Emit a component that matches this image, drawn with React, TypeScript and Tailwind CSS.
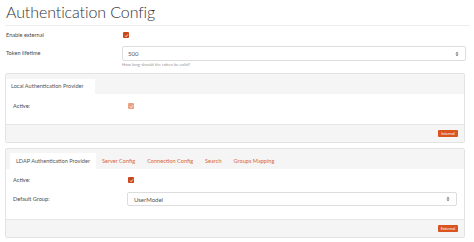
import React from "react";

function Check({ dim }: { dim?: boolean }) {
  return (
    <span
      className={
        "flex h-[6px] w-[6px] items-center justify-center rounded-[1px] " +
        (dim ? "bg-[#e9a083]" : "bg-[#c9471b]")
      }
    >
      <svg width="5" height="5" viewBox="0 0 10 10">
        <path d="M2 5.2 L4.2 7.4 L8 2.8" fill="none" stroke="#fff" strokeWidth="1.6" />
      </svg>
    </span>
  );
}

function Spinner() {
  return (
    <svg width="4" height="6" viewBox="0 0 4 6">
      <path d="M0.5 2.5 L2 0.8 L3.5 2.5 Z" fill="#666" />
      <path d="M0.5 3.5 L2 5.2 L3.5 3.5 Z" fill="#666" />
    </svg>
  );
}

function Badge({ children }: { children: React.ReactNode }) {
  return (
    <span className="flex h-[7px] w-[20px] items-center justify-center rounded-[1px] bg-[#d9541f] text-[4px] leading-none text-white">
      {children}
    </span>
  );
}

export default function App() {
  return (
    <div className="h-[242px] w-[474px] overflow-hidden bg-white font-['Lato',sans-serif] text-[#4a4a4a]">
      <div className="px-[5px]">
        <h1 className="h-[25px] pl-[1px] pt-[2px] text-[16px] font-light leading-[20px] tracking-[-0.1px] text-[#333]">
          Authentication Config
        </h1>
        <div className="w-[465px] border-t border-[#eee]" />
        <div className="flex h-[18px] items-center text-[5.6px]">
          <div className="w-[118px] pl-[1px]">Enable external</div>
          <Check />
        </div>
        <div className="mt-[2px] flex h-[15px] items-center text-[5.6px]">
          <div className="w-[117px] pl-[1px]">Token lifetime</div>
          <div className="flex h-[15px] w-[344px] items-center justify-between rounded-[2px] border border-[#ddd] pl-[5px] pr-[6px] text-[6px] text-[#555]">
            <span>500</span>
            <Spinner />
          </div>
        </div>
        <div className="flex h-[8px] items-center pl-[117px] text-[4.3px] text-[#999]">
          How long should the token be valid?
        </div>
        <div className="mt-[4px] w-[460px] rounded-[2px] border border-[#e3e3e3]">
          <div className="flex h-[20px] items-end bg-[#f5f5f5]">
            <div className="flex h-[15px] w-[89px] items-center bg-white pl-[5px] text-[5.6px] text-[#555]">
              Local Authentication Provider
            </div>
          </div>
          <div className="h-[30px] bg-white pt-[7px]">
            <div className="flex h-[10px] items-center text-[5.6px]">
              <div className="w-[122px] pl-[7px]">Active:</div>
              <Check dim />
            </div>
          </div>
          <div className="flex h-[18px] items-center justify-end border-t border-[#e6e6e6] bg-[#f5f5f5] pr-[6px]">
            <Badge>Internal</Badge>
          </div>
        </div>
        <div className="mt-[5px] w-[460px] rounded-[2px] border border-[#e3e3e3]">
          <div className="flex h-[20px] items-end bg-[#f5f5f5] pl-[4px] text-[5.6px]">
            <div className="flex h-[16px] items-center bg-white px-[6px] text-[#555]">
              LDAP Authentication Provider
            </div>
            <div className="flex h-[16px] items-center px-[6px] text-[#d9663a]">Server Config</div>
            <div className="flex h-[16px] items-center px-[6px] text-[#d9663a]">Connection Config</div>
            <div className="flex h-[16px] items-center px-[6px] text-[#d9663a]">Search</div>
            <div className="flex h-[16px] items-center px-[6px] text-[#d9663a]">Groups Mapping</div>
          </div>
          <div className="h-[50px] bg-white pt-[6px]">
            <div className="flex h-[10px] items-center text-[5.6px]">
              <div className="w-[122px] pl-[7px]">Active:</div>
              <Check />
            </div>
            <div className="mt-[7px] flex h-[14px] items-center text-[5.6px]">
              <div className="w-[121px] pl-[7px]">Default Group:</div>
              <div className="flex h-[14px] w-[330px] items-center justify-between rounded-[2px] border border-[#ddd] pl-[6px] pr-[6px] text-[6px] text-[#555]">
                <span>UserModel</span>
                <Spinner />
              </div>
            </div>
          </div>
          <div className="flex h-[18px] items-center justify-end border-t border-[#e6e6e6] bg-[#f5f5f5] pr-[6px]">
            <Badge>External</Badge>
          </div>
        </div>
      </div>
    </div>
  );
}
